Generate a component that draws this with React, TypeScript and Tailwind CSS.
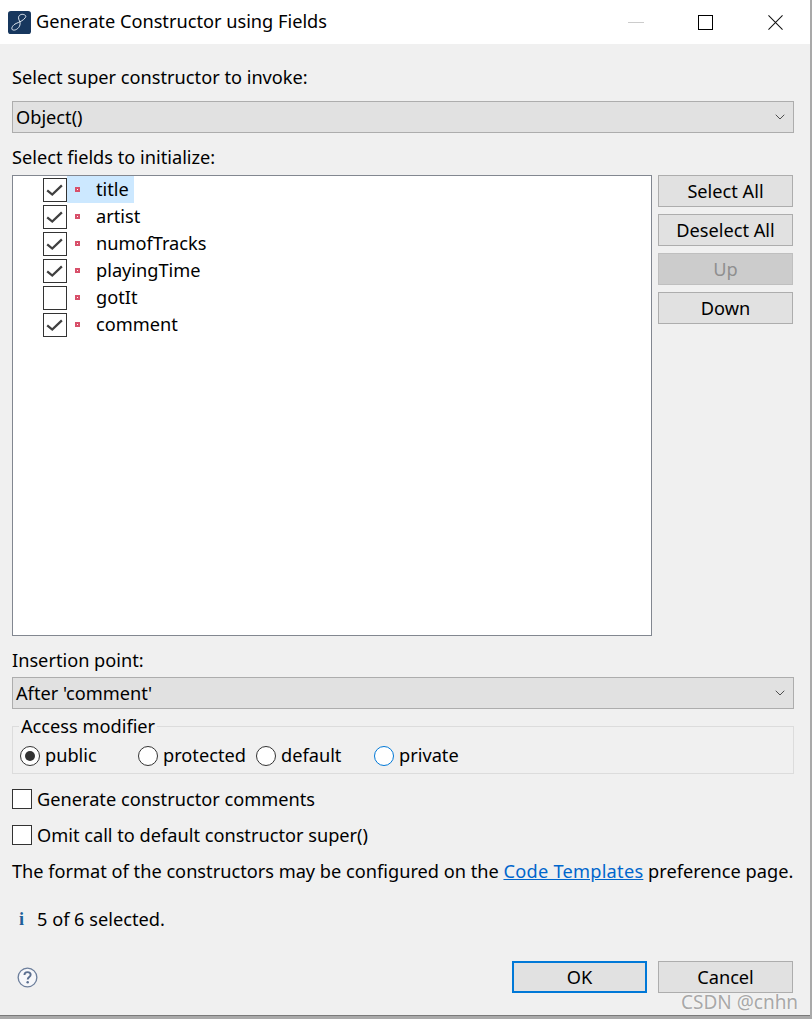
import { ChevronDown } from "lucide-react";

const fields = [
  { name: "title", checked: true, selected: true },
  { name: "artist", checked: true },
  { name: "numofTracks", checked: true },
  { name: "playingTime", checked: true },
  { name: "gotIt", checked: false },
  { name: "comment", checked: true },
];

function Tick() {
  return (
    <svg viewBox="0 0 24 24" className="h-[22px] w-[22px]" fill="none" stroke="#404040" strokeWidth="2.5">
      <path d="M3.5 12.5 L9 17 L19.5 7" />
    </svg>
  );
}

function Combo({ text }: { text: string }) {
  return (
    <div className="flex h-8 items-center justify-between border border-[#adadad] bg-[#e1e1e1] pl-[3px] pr-[5px]">
      <span>{text}</span>
      <ChevronDown className="h-4 w-4 text-[#444444]" strokeWidth={1.4} />
    </div>
  );
}

function Btn({ label, disabled, primary }: { label: string; disabled?: boolean; primary?: boolean }) {
  const cls = disabled
    ? "border border-[#bfbfbf] bg-[#cccccc] text-[#8f8f8f]"
    : primary
      ? "border-2 border-[#0078d7] bg-[#e1e1e1]"
      : "border border-[#adadad] bg-[#e1e1e1]";
  return <div className={`flex h-8 w-[135px] items-center justify-center ${cls}`}>{label}</div>;
}

function Radio({ label, on, focus, width }: { label: string; on?: boolean; focus?: boolean; width: string }) {
  return (
    <div className={`flex h-5 items-center gap-[5px] ${width}`}>
      <span
        className={`flex h-5 w-5 items-center justify-center rounded-full border bg-white ${focus ? "border-[#0078d7]" : "border-[#333333]"}`}
      >
        {on && <span className="h-[10px] w-[10px] rounded-full bg-[#333333]" />}
      </span>
      <span className="pb-[2px]">{label}</span>
    </div>
  );
}

function Check({ label }: { label: string }) {
  return (
    <div className="flex h-5 items-center gap-[5px]">
      <span className="h-5 w-5 border border-[#333333] bg-white" />
      <span>{label}</span>
    </div>
  );
}

export default function App() {
  return (
    <div className="relative h-[1019px] w-[812px] overflow-hidden bg-[#a9a9a9] font-['Noto_Sans','Open_Sans',sans-serif] text-[18.2px] leading-6 text-black">
      <div className="flex h-[1016px] w-[810px] flex-col border-b border-[#7a7a7a] bg-[#f0f0f0]">
        {/* title bar */}
        <div className="flex h-11 shrink-0 items-center bg-white pl-2">
          <svg viewBox="0 0 24 24" className="h-[23px] w-[23px]">
            <rect width="24" height="24" rx="3" fill="#17375e" />
            <path
              d="M18 4.5 C15.5 2.5 11.5 3.5 11 6.5 C10.6 9.5 13.5 11 12.5 14.5 C11.5 18.5 7 21 4.5 19.5 C3 18 5 14.5 8.5 13 C12 11.5 16 10 18 7 C19 5.5 18.5 4.8 18 4.5 Z"
              fill="none"
              stroke="#e6edf5"
              strokeWidth="1"
            />
          </svg>
          <span className="ml-[5px] pb-[2px]">Generate Constructor using Fields</span>
          <div className="ml-auto flex items-center">
            <span className="h-px w-4 bg-[#cccccc]" />
            <span className="ml-[54px] h-[15px] w-[15px] border border-black" />
            <svg viewBox="0 0 16 16" className="ml-[55px] mr-[27px] h-[15px] w-[15px]" fill="none" stroke="#111111" strokeWidth="1.1">
              <path d="M0.5 0.5 L15.5 15.5 M15.5 0.5 L0.5 15.5" />
            </svg>
          </div>
        </div>

        {/* form */}
        <div className="flex flex-1 flex-col pl-3 pr-4">
          <div className="mt-[21px] h-6">Select super constructor to invoke:</div>
          <div className="mt-3">
            <Combo text="Object()" />
          </div>
          <div className="mt-3 h-6">Select fields to initialize:</div>
          <div className="mt-[6px] flex gap-[6px]">
            <div className="h-[461px] w-[640px] border border-[#828790] bg-white">
              {fields.map((f) => (
                <div key={f.name} className="flex h-[27px] items-center pl-[30px]">
                  <span className="flex h-6 w-6 items-center justify-center border border-[#333333] bg-white">
                    {f.checked && <Tick />}
                  </span>
                  <span className={`flex h-[27px] items-center ${f.selected ? "bg-[#cce8ff]" : ""}`}>
                    <span className="ml-2 h-[5px] w-[5px] border-2 border-[#d8506a] bg-white" />
                    <span className="ml-4 pb-[2px] pr-[5px]">{f.name}</span>
                  </span>
                </div>
              ))}
            </div>
            <div className="flex flex-col gap-[7px]">
              <Btn label="Select All" />
              <Btn label="Deselect All" />
              <Btn label="Up" disabled />
              <Btn label="Down" />
            </div>
          </div>
          <div className="mt-3 h-6">Insertion point:</div>
          <div className="mt-[5px]">
            <Combo text="After 'comment'" />
          </div>
          <fieldset className="mt-2 h-[57px] border border-[#dcdcdc] pl-[7px]">
            <legend className="-ml-px px-[2px] leading-[18px]">Access modifier</legend>
            <div className="mt-[11px] flex items-center">
              <Radio label="public" on width="w-[118px]" />
              <Radio label="protected" width="w-[118px]" />
              <Radio label="default" width="w-[118px]" />
              <Radio label="private" focus width="w-[118px]" />
            </div>
          </fieldset>
          <div className="mt-[15px] flex flex-col gap-4">
            <Check label="Generate constructor comments" />
            <Check label="Omit call to default constructor super()" />
          </div>
          <div className="mt-[14px] h-6 whitespace-nowrap">
            The format of the constructors may be configured on the{" "}
            <span className="tracking-[0.25px] text-[#0066cc] underline">Code Templates</span> preference page.
          </div>
          <div className="mt-6 flex h-6 items-center">
            <span className="ml-[7px] w-[18px] font-['Liberation_Serif',serif] font-bold text-[#1f5f99]">i</span>
            <span>5 of 6 selected.</span>
          </div>
          <div className="mt-[30px] flex items-center">
            <svg viewBox="0 0 22 22" className="ml-[5px] h-[21px] w-[21px]" fill="none">
              <circle cx="11" cy="11" r="9.8" stroke="#6d7f9c" strokeWidth="1.4" fill="#f6f7fa" />
              <path
                d="M7.8 8.4 C7.8 6.4 9.3 5.4 11 5.4 C12.9 5.4 14.3 6.5 14.3 8.2 C14.3 10.4 11.2 10.6 11.2 13"
                stroke="#5b6f90"
                strokeWidth="2"
              />
              <circle cx="11.2" cy="16" r="1.3" fill="#5b6f90" />
            </svg>
            <div className="ml-auto mr-px flex gap-[11px]">
              <Btn label="OK" primary />
              <Btn label="Cancel" />
            </div>
          </div>
        </div>
      </div>

      {/* watermark */}
      <span className="absolute left-[681px] top-[990px] text-[19px] leading-6 text-[#a8a8a8] [text-shadow:0_0_2px_#ffffff]">
        CSDN @cnhn
      </span>
    </div>
  );
}
